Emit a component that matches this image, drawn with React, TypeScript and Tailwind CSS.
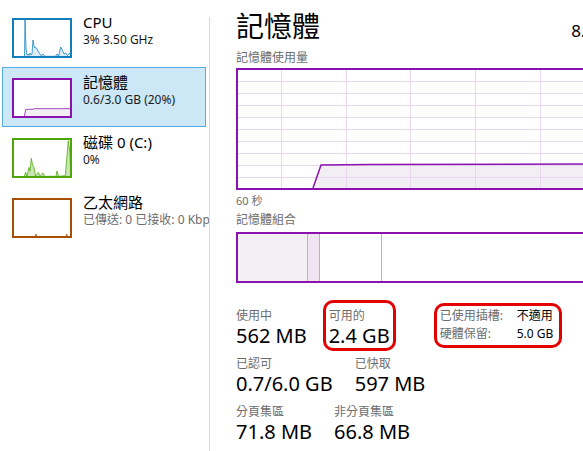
import React from "react";

const font = "font-['Noto_Sans','Noto_Sans_CJK_TC',sans-serif]";

function Thumb({ color, fill, line, children }: { color: string; fill: string; line: string; children?: React.ReactNode }) {
  return (
    <svg width="60" height="40" viewBox="0 0 60 40" className="mt-[10px] shrink-0 bg-white">
      {line && <polygon points={`${line} 59,39 `} fill={fill} />}
      {line && <polyline points={line} fill="none" stroke={color} strokeOpacity="0.75" strokeWidth="1" />}
      {children}
      <rect x="1" y="1" width="58" height="38" fill="none" stroke={color} strokeWidth="2" />
    </svg>
  );
}

const cpuLine =
  "12.5,39 13,1.5 14,30 15,37 16,36 17,37.5 18,35 19,37 20,36 21,22 22,28 23,30 24,29.5 25,31 26,33 27,34.5 28,36 29,37.7 31,36 32.7,38.3 43.7,38.3 45,36 46.5,38 48.7,29 50.3,32 52,36 53.7,35 55.5,37.5 57.7,35 59,38";
const diskLine =
  "12,38.5 13.7,34.3 15,38 17,29.3 18,33 19.3,20.3 20.7,27.7 22,29.3 23.5,38 26.3,34.3 28,38.3 31,35 32.5,38.3 44,38.3 45,33 46.5,38.3 53.3,37.7 56.3,2.7 58,15 58.7,37.7";
const memLine = "12.3,39 13.7,31.3 21.3,31.3 21.7,30.7 59,30.7";
const netLine = "12,38.5 23,38.5 24,36 25,38.5 54,38.5 54.7,36 55.5,38.5 59,38.5";

function SideItem({
  thumb,
  name,
  sub,
  subGray,
  selected,
}: {
  thumb: React.ReactNode;
  name: string;
  sub: string;
  subGray?: boolean;
  selected?: boolean;
}) {
  return (
    <div
      className={`ml-[2px] flex h-[60px] w-[204px] items-start gap-[11px] border pl-[9px] ${
        selected ? "border-[#56aadd] bg-[#cce7f6]" : "border-transparent"
      }`}
    >
      {thumb}
      <div className="mt-[4px] flex flex-col whitespace-nowrap">
        <span className="text-[15px] leading-[20px] text-black">{name}</span>
        <span className={`text-[12px] leading-[16px] ${subGray ? "text-[#6d6d6d]" : "text-[#1a1a1a]"}`}>{sub}</span>
      </div>
    </div>
  );
}

function Stat({ label, value }: { label: string; value: string }) {
  return (
    <div className="flex flex-col whitespace-nowrap">
      <span className="text-[12px] leading-[16px] text-[#6d6d6d]">{label}</span>
      <span className="text-[20px] leading-[24px] text-black">{value}</span>
    </div>
  );
}

export default function App() {
  const vx = [43, 108, 172, 237, 302, 367];
  const hy = [11, 23, 35, 47, 59, 71, 83, 95, 107];
  return (
    <div className={`flex h-[451px] w-[583px] overflow-hidden bg-white ${font}`}>
      <aside className="flex w-[209px] shrink-0 flex-col overflow-hidden pt-[7px]">
        <SideItem
          thumb={<Thumb color="#117dbb" fill="#dcebf6" line={cpuLine} />}
          name="CPU"
          sub="3%  3.50 GHz"
        />
        <SideItem
          selected
          thumb={<Thumb color="#8b12ae" fill="#f2eff4" line={memLine} />}
          name="記憶體"
          sub="0.6/3.0 GB (20%)"
        />
        <SideItem
          thumb={<Thumb color="#4da60c" fill="#c9e6b0" line={diskLine} />}
          name="磁碟 0 (C:)"
          sub="0%"
        />
        <SideItem
          thumb={<Thumb color="#a74f01" fill="#f3e3d4" line={netLine} />}
          name="乙太網路"
          sub="已傳送: 0 已接收: 0 Kbps"
          subGray
        />
      </aside>

      <div className="mt-[17px] w-px shrink-0 self-stretch bg-[#dadada]" />

      <main className="flex w-[400px] shrink-0 flex-col pl-[26px]">
        <div className="mt-[8px] flex w-[387px] items-baseline justify-between whitespace-nowrap">
          <span className="text-[28px] leading-[36px] text-black">記憶體</span>
          <span className="text-[17px] leading-[22px] text-black">8.0 GB</span>
        </div>

        <span className="mt-[7px] text-[12px] leading-[14px] text-[#6d6d6d]">記憶體使用量</span>
        <div className="mt-[3px] h-[122px] w-[400px] border-2 border-[#8b12ae]">
          <svg width="396" height="118" viewBox="0 0 396 118" className="block">
            <polygon points="75,118 83,95 134,94.5 396,94 396,118" fill="#f2eff4" />
            {vx.map((x) => (
              <line key={x} x1={x + 0.5} y1="0" x2={x + 0.5} y2="118" stroke="#ead8f0" strokeWidth="1" />
            ))}
            {hy.map((y) => (
              <line key={y} x1="0" y1={y + 0.5} x2="396" y2={y + 0.5} stroke="#ead8f0" strokeWidth="1" />
            ))}
            <polyline points="75,118 83,95 134,94.5 396,94" fill="none" stroke="#8b12ae" strokeWidth="1.5" />
          </svg>
        </div>
        <span className="mt-[4px] text-[11px] leading-[14px] text-[#6d6d6d]">60 秒</span>
        <span className="mt-[5px] text-[12px] leading-[14px] text-[#6d6d6d]">記憶體組合</span>
        <div className="mt-[5px] flex h-[51px] w-[400px] border-2 border-[#8b12ae]">
          <div className="w-[69px] bg-[#f3f0f4]" />
          <div className="w-[12px] border-l border-[#c7a8d4] bg-[#eee4f2]" />
          <div className="w-[62px] border-l border-[#c7a8d4] bg-white" />
          <div className="flex-1 border-l border-[#c7a8d4] bg-white" />
        </div>

        <div className="mt-[25px] flex flex-col gap-[8px]">
          <div className="flex items-start gap-[22px]">
            <Stat label="使用中" value="562 MB" />
            <div className="-mx-[6px] -mb-[3px] -mt-[8px] rounded-[10px] border-[3px] border-[#e30000] px-[3px] pt-[5px]">
              <Stat label="可用的" value="2.4 GB" />
            </div>
            <div className="-mt-[5px] ml-[22px] grid grid-cols-[77px_auto] rounded-[10px] border-[3px] border-[#e30000] pb-[2px] pl-[3px] pr-[6px] pt-[1px] text-[12px] leading-[18px] whitespace-nowrap">
              <span className="text-[#6d6d6d]">已使用插槽:</span>
              <span className="text-black">不適用</span>
              <span className="text-[#6d6d6d]">硬體保留:</span>
              <span className="text-black">5.0 GB</span>
            </div>
          </div>
          <div className="flex gap-[22px]">
            <Stat label="已認可" value="0.7/6.0 GB" />
            <Stat label="已快取" value="597 MB" />
          </div>
          <div className="flex gap-[22px]">
            <Stat label="分頁集區" value="71.8 MB" />
            <Stat label="非分頁集區" value="66.8 MB" />
          </div>
        </div>
      </main>
    </div>
  );
}
